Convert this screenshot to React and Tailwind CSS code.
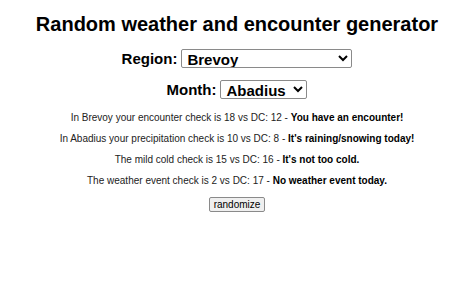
import { useState } from "react";

const REGIONS = ["Brevoy", "Stolen Lands", "Numeria", "Mendev"];
const MONTHS = ["Abadius", "Calistril", "Pharast", "Gozran", "Desnus", "Sarenith", "Erastus", "Arodus", "Rova", "Lamashan", "Neth", "Kuthona"];

function CheckLine({ children, result }) {
  return (
    <p className="text-[10px] leading-[12px] text-[#222]">
      {children} - <b className="font-bold text-black">{result}</b>
    </p>
  );
}

export default function App() {
  const [region, setRegion] = useState("Brevoy");
  const [month, setMonth] = useState("Abadius");

  return (
    <div className="flex min-h-[296px] flex-col items-center bg-white pt-[11px] text-black" style={{ fontFamily: '"Liberation Sans", Arial, sans-serif' }}>
      <h1 className="text-[20px] font-bold leading-[26px]">Random weather and encounter generator</h1>

      <label className="mt-[12px] flex h-[19px] items-center gap-[4px] text-[15px] font-bold leading-[19px]">
        Region:
        <select
          value={region}
          onChange={(e) => setRegion(e.target.value)}
          className="h-[19px] w-[171px] rounded-[2px] border border-[#8a8a8a] bg-white pl-[1px] text-[15px] font-bold leading-[17px]"
        >
          {REGIONS.map((r) => (
            <option key={r}>{r}</option>
          ))}
        </select>
      </label>

      <label className="mt-[12px] flex h-[19px] items-center gap-[4px] text-[15px] font-bold leading-[19px]">
        Month:
        <select
          value={month}
          onChange={(e) => setMonth(e.target.value)}
          className="h-[19px] w-[87px] rounded-[2px] border border-[#8a8a8a] bg-white pl-[1px] text-[15px] font-bold leading-[17px]"
        >
          {MONTHS.map((m) => (
            <option key={m}>{m}</option>
          ))}
        </select>
      </label>

      <div className="mt-[13px] flex flex-col items-center gap-[9px]">
        <CheckLine result="You have an encounter!">In Brevoy your encounter check is 18 vs DC: 12</CheckLine>
        <CheckLine result="It's raining/snowing today!">In Abadius your precipitation check is 10 vs DC: 8</CheckLine>
        <CheckLine result="It's not too cold.">The mild cold check is 15 vs DC: 16</CheckLine>
        <CheckLine result="No weather event today.">The weather event check is 2 vs DC: 17</CheckLine>
      </div>

      <button
        type="button"
        className="mt-[10px] h-[15px] rounded-[2px] border border-[#8a8a8a] bg-[#efefef] px-[4px] text-[10px] leading-[13px] text-black"
      >
        randomize
      </button>
    </div>
  );
}
